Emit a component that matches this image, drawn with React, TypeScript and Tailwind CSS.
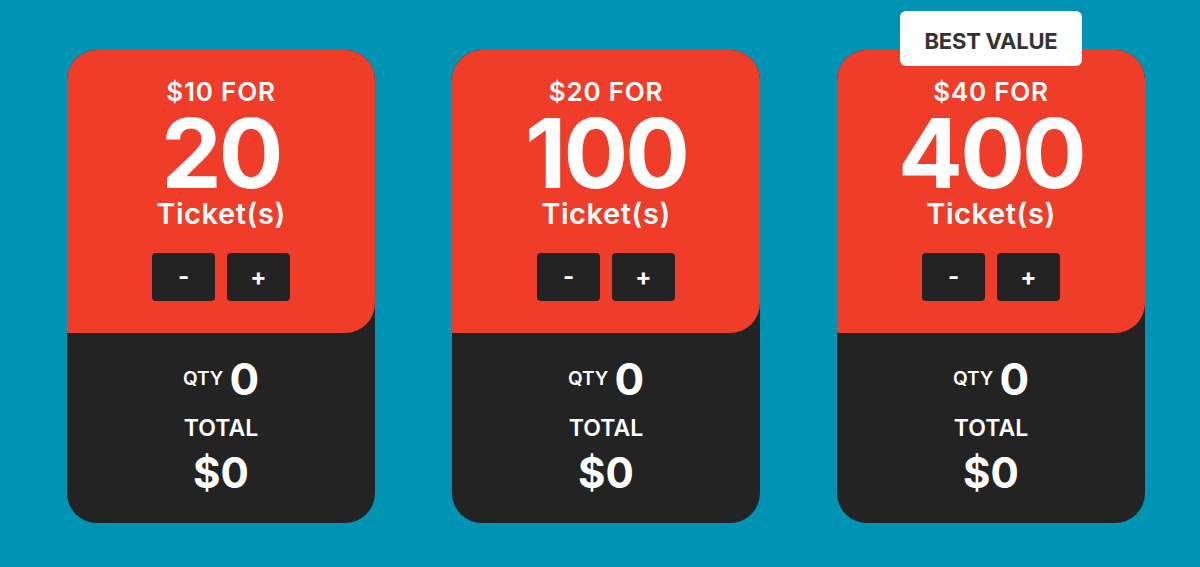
import { useState } from 'react';

interface Pack {
  price: number;
  tickets: number;
  badge?: string;
}

const packs: Pack[] = [
  { price: 10, tickets: 20 },
  { price: 20, tickets: 100 },
  { price: 40, tickets: 400, badge: 'BEST VALUE' },
];

function TicketCard({ price, tickets, badge }: Pack) {
  const [qty, setQty] = useState(0);

  return (
    <div className="relative w-[308px]">
      {badge && (
        <div className="absolute -top-[39px] left-1/2 z-10 flex h-[55px] w-[182px] -translate-x-1/2 items-center justify-center whitespace-nowrap rounded-md bg-white pt-[5px] text-[22px] leading-[22px] font-bold tracking-[-0.01em] text-[#333]">
          {badge}
        </div>
      )}
      <div className="flex h-[473px] flex-col overflow-hidden rounded-[30px] bg-[#232323]">
        {/* top */}
        <div className="flex h-[283px] flex-col items-center rounded-br-[30px] bg-[#ef3d2a] pt-[29px] text-white">
          <div className="text-[26px] leading-[26px] font-semibold tracking-[0.03em]">${price} FOR</div>
          <div className="mt-[4px] text-[96px] leading-[88px] font-bold tracking-[-0.03em]">{tickets}</div>
          <div className="mt-[2px] text-[29px] leading-[30px] font-semibold tracking-[0.02em]">Ticket(s)</div>
          <div className="mt-[24px] flex gap-3">
            <button
              onClick={() => setQty(Math.max(0, qty - 1))}
              className="flex h-[48px] w-[63px] items-center justify-center rounded bg-[#232323] text-[24px] font-bold text-white"
            >
              -
            </button>
            <button
              onClick={() => setQty(qty + 1)}
              className="flex h-[48px] w-[63px] items-center justify-center rounded bg-[#232323] text-[24px] font-bold text-white"
            >
              +
            </button>
          </div>
        </div>

        {/* bottom */}
        <div className="flex flex-col items-center pt-[24px] text-white">
          <div className="flex items-center gap-[6px]">
            <span className="text-[19px] leading-[20px] font-semibold">QTY</span>
            <span className="text-[44px] leading-[44px] font-bold">{qty}</span>
          </div>
          <div className="mt-[16px] text-[23px] leading-[23px] font-semibold">TOTAL</div>
          <div className="mt-[12px] text-[42px] leading-[42px] font-bold">${qty * price}</div>
        </div>
      </div>
    </div>
  );
}

export default function App() {
  return (
    <div
      className="flex min-h-[567px] w-full justify-center gap-[77px] bg-[#0093b3] pt-[50px] pl-3"
      style={{ fontFamily: 'Inter, "Liberation Sans", sans-serif' }}
    >
      {packs.map((p) => (
        <TicketCard key={p.price} {...p} />
      ))}
    </div>
  );
}
